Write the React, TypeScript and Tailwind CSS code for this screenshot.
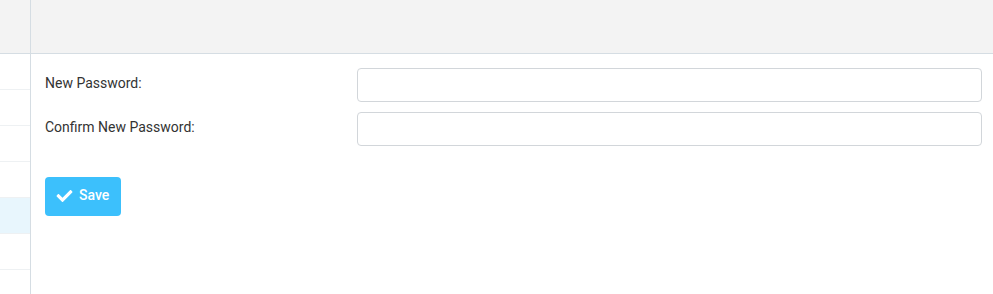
import React from "react";
import { FaCheck } from "react-icons/fa";

export default function App() {
  const rows = [false, false, false, false, true, false];
  return (
    <div className="flex h-[294px] w-[993px] overflow-hidden bg-white font-['Roboto',sans-serif] text-[14px] text-[#333]">
      <div className="flex w-[31px] shrink-0 flex-col border-r border-[#d5dde3]">
        <div className="h-[54px] shrink-0 border-b border-[#d5dde3] bg-[#f3f3f3]" />
        {rows.map((h, i) => (
          <div
            key={i}
            className={`h-[36px] shrink-0 border-b border-[#eef1f3] ${h ? "bg-[#e8f6fd]" : "bg-white"}`}
          />
        ))}
      </div>
      <div className="flex flex-1 flex-col">
        <div className="h-[54px] shrink-0 border-b border-[#d5dde3] bg-[#f3f3f3]" />
        <div className="flex flex-col pl-[14px] pr-[11px] pt-[14px]">
          <div className="flex items-center">
            <label className="mb-[3px] w-[312px] shrink-0">New Password:</label>
            <input type="password" className="h-[34px] flex-1 rounded-[4px] border border-[#d2d6da] bg-white outline-none" />
          </div>
          <div className="mt-[10px] flex items-center">
            <label className="mb-[3px] w-[312px] shrink-0">Confirm New Password:</label>
            <input type="password" className="h-[34px] flex-1 rounded-[4px] border border-[#d2d6da] bg-white outline-none" />
          </div>
          <div className="mt-[31px]">
            <button className="flex h-[39px] w-[76px] items-center gap-[6px] rounded-[4px] bg-[#3cc0fc] pb-[2px] pl-[11px] text-[14px] font-medium text-white">
              <FaCheck className="h-[16px] w-[17px]" />
              <span>Save</span>
            </button>
          </div>
        </div>
      </div>
    </div>
  );
}
